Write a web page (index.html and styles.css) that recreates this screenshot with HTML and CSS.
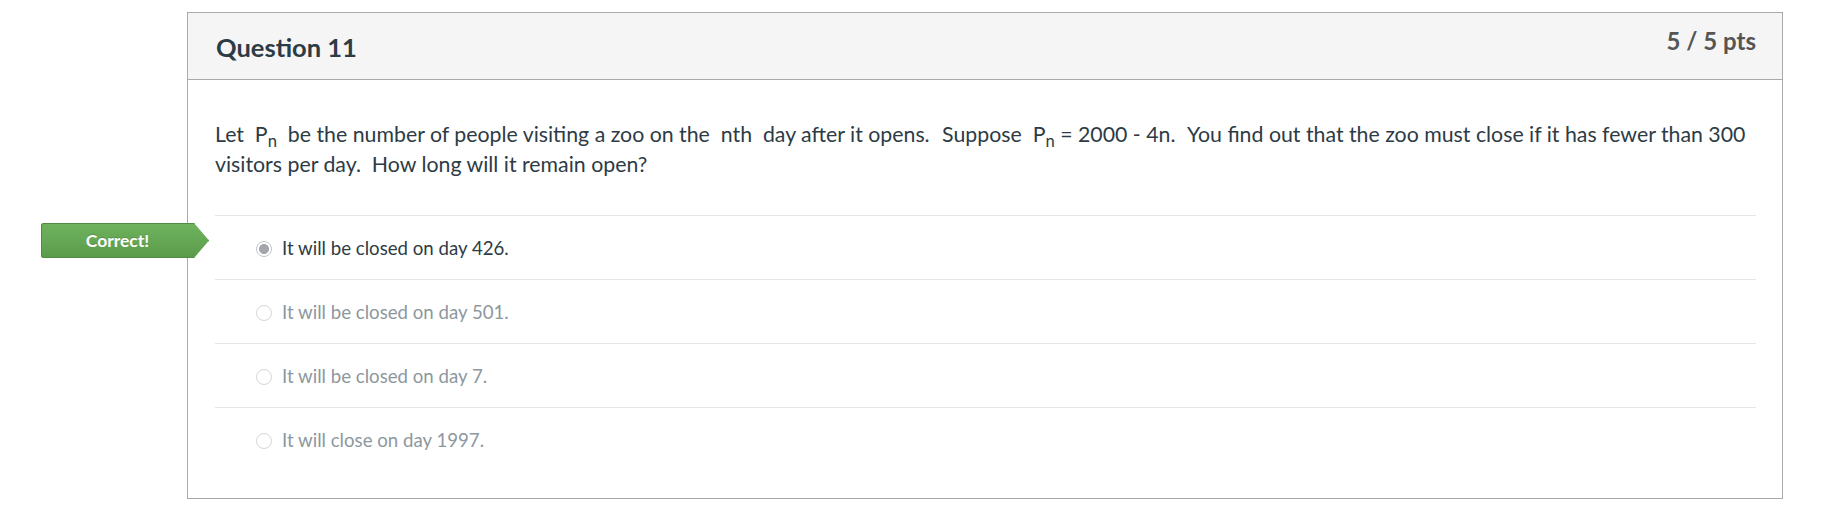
FILE: index.html
```html
<!DOCTYPE html>
<html lang="en">
<head>
<meta charset="utf-8">
<title>Question 11</title>
<link rel="stylesheet" href="styles.css">
</head>
<body>
<div class="page">
  <div class="question">
    <div class="header">
      <h2 class="name">Question 11</h2>
      <div class="points">5 / 5 pts</div>
    </div>
    <div class="content">
      <p class="text">Let&nbsp; P<sub>n</sub>&nbsp; be the number of people visiting a zoo on the&nbsp; nth&nbsp; day after it opens.<span class="gap"></span> Suppose&nbsp; P<sub>n</sub> = 2000 - 4n.<span class="gap"></span> You find out that the zoo must close if it has fewer than 300 visitors per day.&nbsp; How long will it remain open?</p>
      <div class="answers">
        <div class="answer selected">
          <div class="flag">Correct!</div>
          <span class="radio"></span>
          <span class="label">It will be closed on day 426.</span>
        </div>
        <div class="answer">
          <span class="radio"></span>
          <span class="label">It will be closed on day 501.</span>
        </div>
        <div class="answer">
          <span class="radio"></span>
          <span class="label">It will be closed on day 7.</span>
        </div>
        <div class="answer">
          <span class="radio"></span>
          <span class="label">It will close on day 1997.</span>
        </div>
      </div>
    </div>
  </div>
</div>
</body>
</html>
```

FILE: styles.css
```css
html, body {
  margin: 0;
  padding: 0;
  background: #ffffff;
}

body {
  font-family: Lato, "Open Sans", "Liberation Sans", sans-serif;
  color: #2d3b45;
}

.page {
  padding: 12px 0 0 187px;
}

.question {
  width: 1596px;
  box-sizing: border-box;
  border: 1px solid #a9a9a9;
  background: #ffffff;
}

.header {
  display: flex;
  justify-content: space-between;
  align-items: flex-start;
  height: 67px;
  box-sizing: border-box;
  padding: 13px 26px 0 28px;
  background: #f5f5f5;
  border-bottom: 1px solid #a9a9a9;
}

.name {
  margin: 6px 0 0 0;
  font-size: 25.5px;
  line-height: 30px;
  font-weight: 700;
  color: #2d3b45;
}

.points {
  font-size: 24px;
  line-height: 30px;
  font-weight: 700;
  color: #555555;
}

.content {
  padding: 39px 26px 27px 27px;
}

.text {
  margin: 0 0 36px 0;
  font-size: 21.3px;
  line-height: 30px;
  color: #2d3b45;
}

.text sub {
  font-size: 0.78em;
  line-height: 0;
  vertical-align: -0.28em;
}

.text .gap {
  display: inline-block;
  width: 7px;
}

.answer {
  position: relative;
  display: flex;
  align-items: center;
  border-top: 1px solid #e6e6e6;
  padding: 18px 0 16px 0;
  font-size: 18.65px;
  line-height: 29px;
  color: #8d979e;
}

.answer.selected {
  color: #2d3b45;
}

.radio {
  width: 16px;
  height: 16px;
  box-sizing: border-box;
  margin: 0 10px 0 41px;
  border: 1px solid #d3d6d9;
  border-radius: 50%;
  background: #ffffff;
  flex: none;
}

.answer.selected .radio {
  border-color: #c3c7cb;
  background: radial-gradient(circle, #a3a7ac 0 4.6px, #ffffff 5.4px);
}

.flag {
  position: absolute;
  left: -174px;
  top: 7px;
  width: 168px;
  height: 35px;
  box-sizing: border-box;
  padding-right: 15px;
  display: flex;
  align-items: center;
  justify-content: center;
  background: linear-gradient(#6fb35e, #5a9b4a);
  box-shadow: inset 0 0 0 1px #508d42;
  border-radius: 3px;
  clip-path: polygon(0 0, calc(100% - 15px) 0, 100% 50%, calc(100% - 15px) 100%, 0 100%);
  color: #ffffff;
  font-size: 17.5px;
  font-weight: 700;
  line-height: 35px;
  text-shadow: 0 -1px 0 rgba(0, 0, 0, 0.15);
}
```
